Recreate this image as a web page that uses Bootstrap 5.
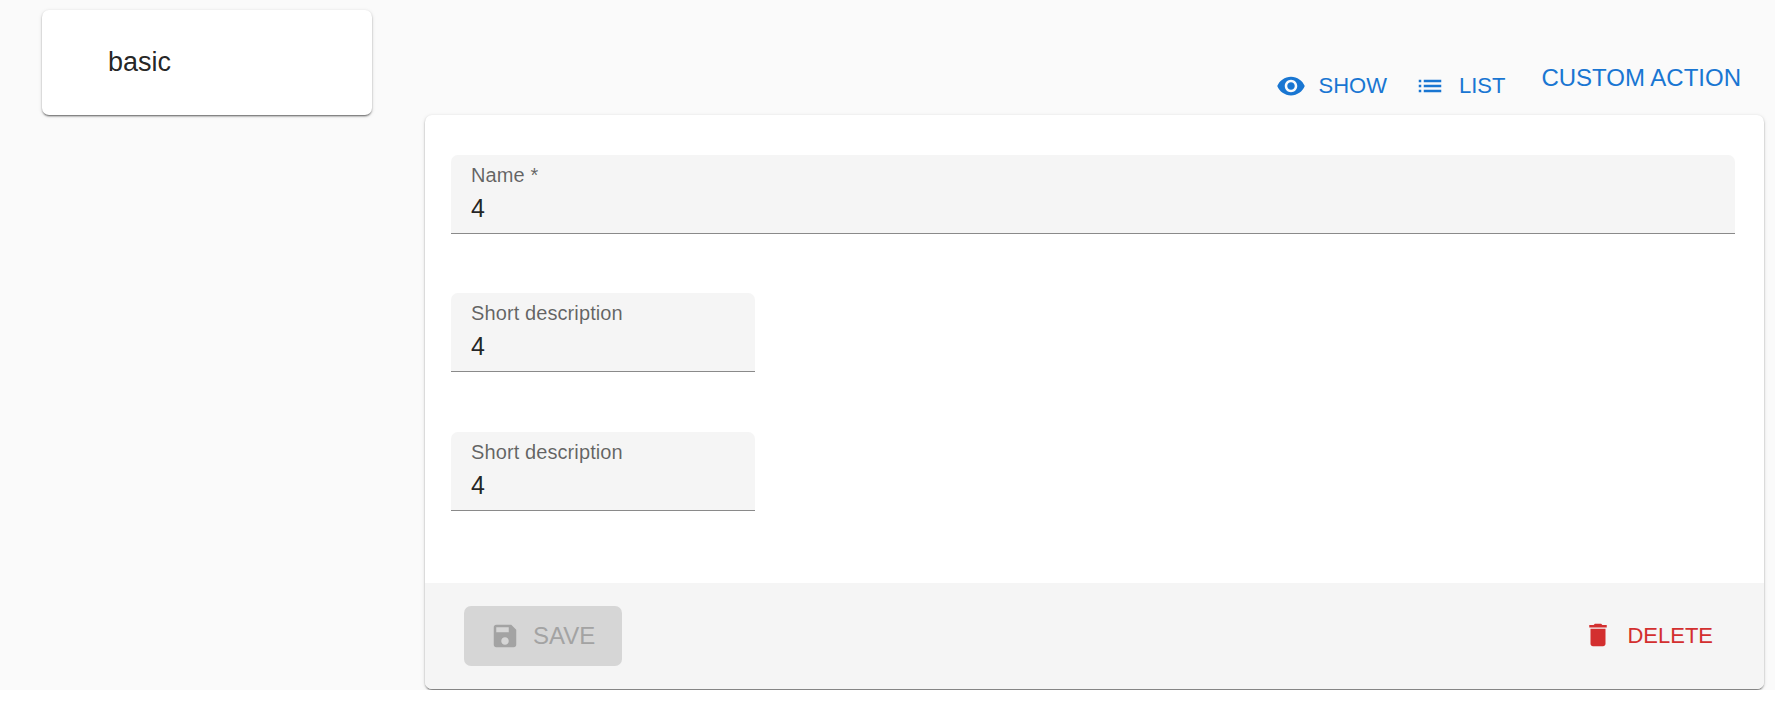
<!DOCTYPE html>
<html lang="en">
<head>
  <meta charset="UTF-8" />
  <meta name="viewport" content="width=device-width, initial-scale=1" />
  <title>Edit</title>
  <link href="https://cdn.jsdelivr.net/npm/bootstrap@5.3.3/dist/css/bootstrap.min.css" rel="stylesheet" />
  <style>
    body {
      background-color: #fff;
      font-family: "Liberation Sans", Arial, sans-serif;
      color: rgba(0, 0, 0, 0.87);
    }
    .page-wrap {
      background-color: #fafafa;
      height: 690px;
      padding-left: 42px;
    }
    .side-card {
      width: 330px;
      height: 105px;
      margin-top: 10px;
      padding: 34px 0 0 66px;
      background: #fff;
      border-radius: 7px;
      font-size: 27px;
      line-height: 36px;
      box-shadow: 0 2px 2px -1px rgba(0,0,0,.45), 0 1px 2px 0 rgba(0,0,0,.2), 0 1px 4px 0 rgba(0,0,0,.12);
    }
    .main-col {
      width: 1339px;
      margin-left: 53px;
    }
    .top-actions {
      height: 115px;
      padding-right: 23px;
      padding-bottom: 14px;
    }
    .act-btn {
      border: 0;
      padding: 0;
      color: #1976d2;
      font-size: 22px;
      line-height: 30px;
      text-transform: uppercase;
      background: none;
    }
    .act-btn svg, .foot-btn svg {
      width: 30px;
      height: 30px;
      fill: currentColor;
      flex: none;
    }
    .act-show { margin-right: 28px; gap: 13px; }
    .act-list { margin-right: 36px; gap: 14px; }
    .act-custom { font-size: 24px; margin-bottom: 8px; }
    .edit-card {
      height: 574px;
      background: #fff;
      border-radius: 7px;
      overflow: hidden;
      box-shadow: 0 2px 2px -1px rgba(0,0,0,.45), 0 1px 2px 0 rgba(0,0,0,.2), 0 1px 4px 0 rgba(0,0,0,.12);
    }
    .edit-body {
      height: 468px;
      padding: 40px 29px 0 26px;
    }
    .fill-field {
      height: 79px;
      margin-bottom: 59px;
      padding: 8px 20px 0;
      background: #f5f5f5;
      border-radius: 7px 7px 0 0;
      border-bottom: 1px solid #8a8a8a;
    }
    .fill-short { width: 304px; }
    .fill-short + .fill-short { margin-top: 60px; }
    .fill-field .form-label {
      display: block;
      margin: 0;
      color: rgba(0, 0, 0, 0.6);
      font-size: 20px;
      line-height: 24px;
      letter-spacing: 0.1px;
    }
    .fill-field .form-control {
      padding: 3px 0 0;
      border: 0;
      border-radius: 0;
      background: transparent;
      box-shadow: none;
      color: rgba(0, 0, 0, 0.87);
      font-size: 25px;
      line-height: 36px;
    }
    .edit-foot {
      height: 106px;
      padding: 23px 51px 0 39px;
      background: #f5f5f5;
    }
    .foot-btn {
      border: 0;
      padding: 0;
      font-size: 22px;
      text-transform: uppercase;
      background: none;
    }
    .btn.save-btn, .btn.save-btn:disabled {
      width: 158px;
      height: 60px;
      padding-left: 26px;
      gap: 13px;
      border-radius: 7px;
      background: #d6d6d6;
      color: #a3a3a3;
      font-size: 24px;
      opacity: 1;
    }
    .btn.del-btn {
      margin-top: 14px;
      height: 30px;
      gap: 14px;
      color: #d32f2f;
    }
  </style>
</head>
<body>
  <div class="page-wrap d-flex align-items-start">
    <div class="side-card">basic</div>

    <div class="main-col">
      <div class="top-actions d-flex justify-content-end align-items-end">
        <a class="btn act-btn act-show d-flex align-items-center" href="#">
          <svg viewBox="0 0 24 24"><path d="M12 4.5C7 4.5 2.73 7.61 1 12c1.73 4.39 6 7.5 11 7.5s9.27-3.11 11-7.5c-1.73-4.39-6-7.5-11-7.5zM12 17c-2.76 0-5-2.24-5-5s2.24-5 5-5 5 2.24 5 5-2.24 5-5 5zm0-8c-1.66 0-3 1.34-3 3s1.34 3 3 3 3-1.34 3-3-1.34-3-3-3z"/></svg>
          Show
        </a>
        <a class="btn act-btn act-list d-flex align-items-center" href="#">
          <svg viewBox="0 0 24 24"><path d="M3 13h2v-2H3v2zm0 4h2v-2H3v2zm0-8h2V7H3v2zm4 4h14v-2H7v2zm0 4h14v-2H7v2zM7 7v2h14V7H7z"/></svg>
          List
        </a>
        <a class="btn act-btn act-custom" href="#">Custom Action</a>
      </div>

      <form class="edit-card">
        <div class="edit-body">
          <div class="fill-field">
            <label class="form-label" for="fName">Name *</label>
            <input class="form-control" id="fName" type="text" value="4" />
          </div>
          <div class="fill-field fill-short">
            <label class="form-label" for="fShort1">Short description</label>
            <input class="form-control" id="fShort1" type="text" value="4" />
          </div>
          <div class="fill-field fill-short">
            <label class="form-label" for="fShort2">Short description</label>
            <input class="form-control" id="fShort2" type="text" value="4" />
          </div>
        </div>
        <div class="edit-foot d-flex justify-content-between align-items-start">
          <button class="btn foot-btn save-btn d-flex align-items-center" type="button" disabled>
            <svg viewBox="0 0 24 24"><path d="M17 3H5c-1.11 0-2 .9-2 2v14c0 1.1.89 2 2 2h14c1.1 0 2-.9 2-2V7l-4-4zm-5 16c-1.66 0-3-1.34-3-3s1.34-3 3-3 3 1.34 3 3-1.34 3-3 3zm3-10H5V5h10v4z"/></svg>
            Save
          </button>
          <button class="btn foot-btn del-btn d-flex align-items-center" type="button">
            <svg viewBox="0 0 24 24"><path d="M6 19c0 1.1.9 2 2 2h8c1.1 0 2-.9 2-2V7H6v12zM19 4h-3.5l-1-1h-5l-1 1H5v2h14V4z"/></svg>
            Delete
          </button>
        </div>
      </form>
    </div>
  </div>

  <script src="https://cdn.jsdelivr.net/npm/bootstrap@5.3.3/dist/js/bootstrap.bundle.min.js"></script>
</body>
</html>
